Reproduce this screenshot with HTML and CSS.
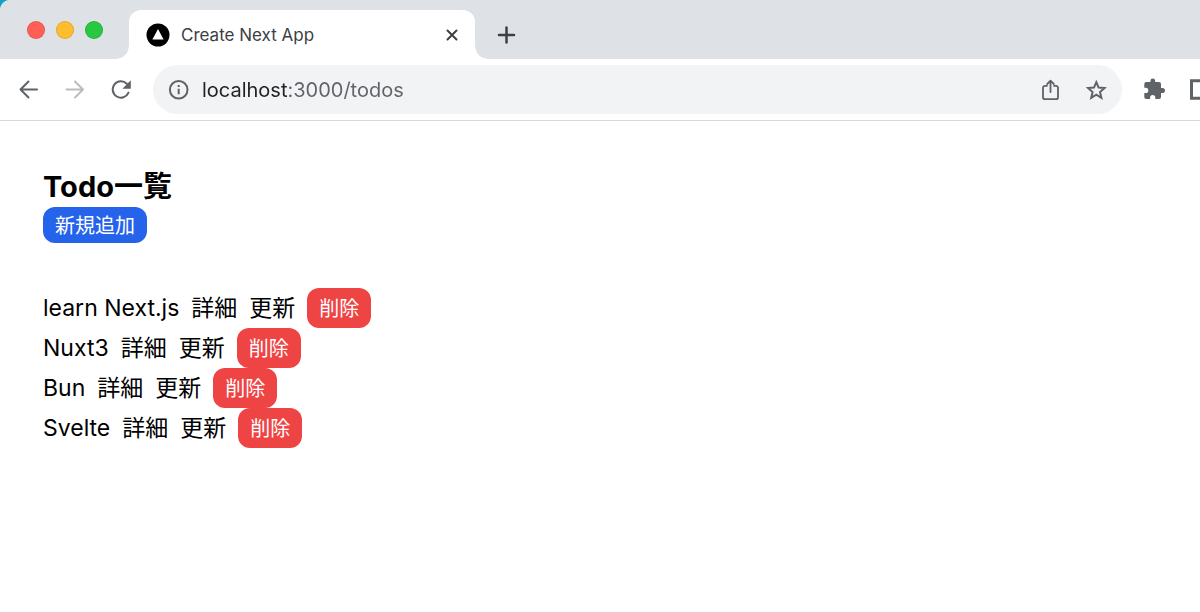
FILE: index.html
```html
<!DOCTYPE html>
<html lang="ja">
<head>
    <meta charset="UTF-8">
    <meta name="viewport" content="width=device-width, initial-scale=1.0">
    <title>Create Next App</title>
    <link rel="stylesheet" href="styles.css">
</head>
<body>
    <div class="window">
        <header class="tab-strip">
            <div class="lights">
                <button class="light close" aria-label="Close window"></button>
                <button class="light minimize" aria-label="Minimize window"></button>
                <button class="light maximize" aria-label="Maximize window"></button>
            </div>
            <div class="tab">
                <svg class="favicon" viewBox="0 0 24 24"><circle cx="12" cy="12" r="11.5"/><path d="M12 6l5.6 10.4H6.4z" fill="#fff"/></svg>
                <span class="tab-title">Create Next App</span>
                <button class="icon-btn tab-btn" aria-label="Close tab">
                    <svg viewBox="0 0 24 24"><path d="M7.500 7.500l9 9M16.500 7.500l-9 9" class="line"/></svg>
                </button>
            </div>
            <button class="icon-btn tab-btn" aria-label="New tab">
                <svg viewBox="0 0 24 24"><path d="M12.500 4.500v15M5 12h15" class="line bold"/></svg>
            </button>
        </header>

        <nav class="toolbar">
            <button class="icon-btn" aria-label="Back">
                <svg viewBox="0 0 24 24"><path d="M20 11.500H3.500M11.500 3.500l-8 8 8 8" class="line"/></svg>
            </button>
            <button class="icon-btn" aria-label="Forward" disabled>
                <svg viewBox="0 0 24 24"><path d="M3.500 11.500H20M12 3.500l8 8-8 8" class="line"/></svg>
            </button>
            <button class="icon-btn" aria-label="Reload">
                <svg viewBox="0 0 24 24"><path d="M19.500 14.600A8.200 8.200 0 1 1 17.800 5.700" class="line"/><path d="M21.800 2.300v8.400h-8.400z"/></svg>
            </button>
            <div class="address-bar">
                <button class="icon-btn" aria-label="Site information">
                    <svg viewBox="0 0 24 24"><circle cx="11.700" cy="11.700" r="8.800" class="line"/><path d="M10.700 10.700h2v5.500h-2zM10.700 7h2v2h-2z"/></svg>
                </button>
                <input class="address" type="text" aria-label="Address" value="localhost:3000/todos">
                <button class="icon-btn" aria-label="Share">
                    <svg viewBox="0 0 24 24"><path d="M9 7.800H7a2 2 0 0 0-2 2v9.400a2 2 0 0 0 2 2h11a2 2 0 0 0 2-2V9.800a2 2 0 0 0-2-2h-2M12.500 14V3M9.200 6l3.300-3.300L15.800 6" class="line thin"/></svg>
                </button>
                <button class="icon-btn" aria-label="Bookmark">
                    <svg viewBox="0 0 24 24"><path d="M12.300 4.200l2.300 5.400 5.900.5-4.500 3.900 1.400 5.800-5.100-3.100-5.100 3.100 1.400-5.800-4.500-3.900 5.900-.5z" class="line miter"/></svg>
                </button>
            </div>
            <div class="extras">
                <button class="icon-btn" aria-label="Extensions">
                    <svg viewBox="0 0 24 24"><path d="M20.500 10H19V6a2 2 0 0 0-2-2h-3.800V3a2.400 2.400 0 0 0-4.800 0v1H4.300a2 2 0 0 0-2 2v3.800h1.400a2.600 2.600 0 0 1 0 5.200H2.300v4a2 2 0 0 0 2 2h3.800v-1.400a2.600 2.600 0 0 1 5.200 0V21H17a2 2 0 0 0 2-2v-4h1.500a2.500 2.500 0 0 0 0-5z"/></svg>
                </button>
                <button class="icon-btn" aria-label="Side panel">
                    <svg viewBox="0 0 24 24"><path d="M3.500 2.800h17.400v17.400H3.500z" class="line heavy miter"/></svg>
                </button>
            </div>
        </nav>

        <main>
            <h1>Todo一覧</h1>
            <button class="btn add">新規追加</button>
            <ul class="todos">
                <li><span>learn Next.js</span><a href="#">詳細</a><a href="#">更新</a><button class="btn delete">削除</button></li>
                <li><span>Nuxt3</span><a href="#">詳細</a><a href="#">更新</a><button class="btn delete">削除</button></li>
                <li><span>Bun</span><a href="#">詳細</a><a href="#">更新</a><button class="btn delete">削除</button></li>
                <li><span>Svelte</span><a href="#">詳細</a><a href="#">更新</a><button class="btn delete">削除</button></li>
            </ul>
        </main>
    </div>
</body>
</html>
```
FILE: styles.css
```css
* {
    box-sizing: border-box;
}
body {
    margin: 0;
    background-color: #16a0c4;
    color: #000;
    font-family: Inter, "Noto Sans CJK JP", sans-serif;
}
button, input {
    font-family: inherit;
    border: none;
    padding: 0;
    margin: 0;
}
button {
    cursor: pointer;
}
.window {
    min-height: 100vh;
    background-color: #fff;
    border-top-left-radius: 10px;
    overflow: hidden;
}

/* tab strip */
.tab-strip {
    display: flex;
    align-items: center;
    background-color: #dee1e6;
    padding: 10px 20px 0 27px;
}
.lights {
    display: flex;
    gap: 11px;
    margin-right: 26px;
    padding-bottom: 9px;
}
.light {
    width: 18px;
    height: 18px;
    border-radius: 50%;
    border: 1px solid rgba(0,0,0,0.1);
}
.light.close {
    background-color: #ff5f57;
}
.light.minimize {
    background-color: #febc2e;
}
.light.maximize {
    background-color: #28c840;
}
.tab {
    position: relative;
    display: flex;
    align-items: center;
    gap: 11px;
    flex: 0 1 346px;
    height: 49px;
    padding: 0 11px 0 17px;
    margin-right: 19px;
    background-color: #fff;
    border-radius: 12px 12px 0 0;
}
.tab::before,
.tab::after {
    content: "";
    position: absolute;
    bottom: 0;
    width: 12px;
    height: 12px;
}
.tab::before {
    right: 100%;
    background: radial-gradient(circle at 0 0, transparent 11px, #fff 12px);
}
.tab::after {
    left: 100%;
    background: radial-gradient(circle at 100% 0, transparent 11px, #fff 12px);
}
.favicon {
    width: 24px;
    height: 24px;
}
.tab-title {
    flex: 1;
    font-size: 17px;
    color: #3c4043;
}

/* icons */
.icon-btn {
    flex: none;
    width: 24px;
    height: 24px;
    background: none;
    color: #5f6368;
}
.icon-btn:disabled {
    color: #babcbe;
}
.tab-btn {
    color: #3c4043;
}
.icon-btn svg {
    display: block;
    fill: currentColor;
}
.icon-btn .line {
    fill: none;
    stroke: currentColor;
    stroke-width: 2;
    stroke-linecap: round;
    stroke-linejoin: round;
}
.icon-btn .bold {
    stroke-width: 2.5;
}
.icon-btn .thin {
    stroke-width: 1.8;
}
.icon-btn .heavy {
    stroke-width: 3;
}
.icon-btn .miter {
    stroke-linejoin: miter;
}

/* toolbar */
.toolbar {
    display: flex;
    align-items: center;
    gap: 22px;
    padding: 6px 0 6px 17px;
    border-bottom: 1px solid #d5d7da;
}
.address-bar {
    display: flex;
    align-items: center;
    gap: 22px;
    flex: 1;
    min-width: 0;
    height: 49px;
    padding: 0 14px;
    margin: 0 -2px;
    background-color: #f1f3f4;
    border-radius: 25px;
}
.address {
    flex: 1;
    min-width: 0;
    height: 32px;
    margin-left: -11px;
    font-size: 20px;
    outline: none;
    /* host is darker than the rest of the url */
    background: linear-gradient(to right, #202124 86px, #5f6368 86px);
    -webkit-background-clip: text;
    background-clip: text;
    color: transparent;
    caret-color: #202124;
}
.extras {
    display: flex;
    gap: 22px;
    margin-right: -12px;
}

/* page */
main {
    padding: 46px 43px;
}
h1 {
    margin: 0;
    font-size: 29px;
    line-height: 40px;
}
.btn {
    display: block;
    padding: 0 12px 2px;
    border-radius: 12px;
    font-size: 20px;
    color: #fff;
}
.btn.add {
    height: 36px;
    background-color: #2563eb;
}
.btn.delete {
    height: 40px;
    background-color: #ef4444;
}
.todos {
    list-style: none;
    margin: 45px 0 0;
    padding: 0;
}
.todos li {
    display: flex;
    align-items: center;
    gap: 12px;
    font-size: 23px;
    line-height: 40px;
}
.todos a {
    color: inherit;
    text-decoration: none;
}
.btn:hover {
    opacity: 0.9;
}
```
